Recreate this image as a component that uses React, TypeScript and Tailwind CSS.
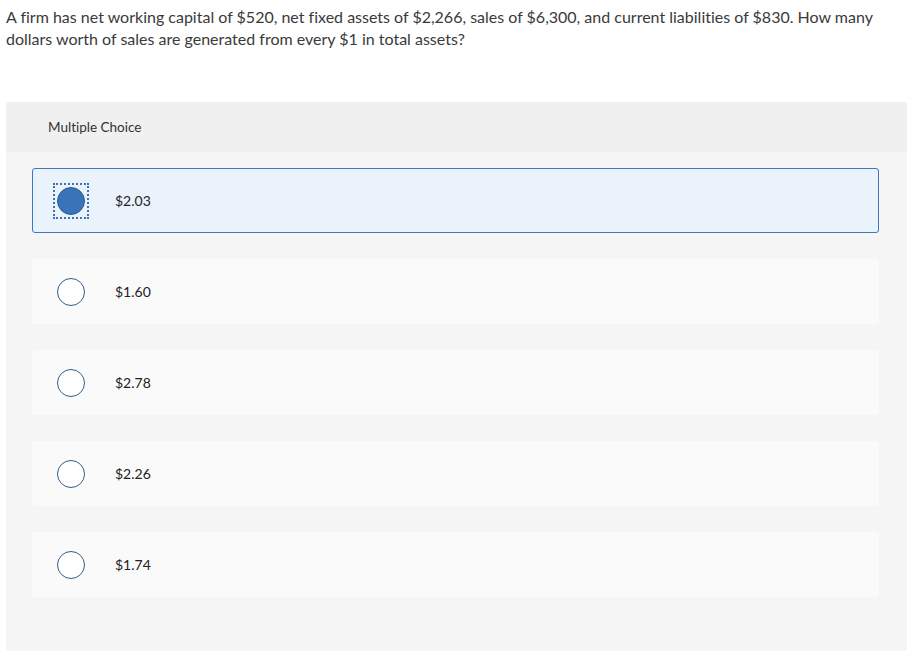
const options = [
  { id: "a", label: "$2.03", selected: true },
  { id: "b", label: "$1.60" },
  { id: "c", label: "$2.78" },
  { id: "d", label: "$2.26" },
  { id: "e", label: "$1.74" },
];

function Radio({ selected }: { selected?: boolean }) {
  if (selected) {
    return (
      <span className="flex h-[36px] w-[36px] items-center justify-center border-2 border-dotted border-[#3a72b5]">
        <span className="h-[28px] w-[28px] rounded-full border border-[#2d5f95] bg-[#3a74b8]" />
      </span>
    );
  }
  return (
    <span className="flex h-[36px] w-[36px] items-center justify-center">
      <span className="h-[28px] w-[28px] rounded-full border-[1.5px] border-[#2f5f8f] bg-white" />
    </span>
  );
}

export default function App() {
  return (
    <div className="min-h-[653px] bg-white font-['Lato',sans-serif] text-[#3a3a3a] [font-variant-ligatures:none]">
      <p className="px-[6px] pt-[6px] text-[16px] leading-[22px]">
        A firm has net working capital of $520, net fixed assets of $2,266, sales of $6,300, and current
        liabilities of $830. How many dollars worth of sales are generated from every $1 in total assets?
      </p>

      <div className="mx-[6px] mt-[52px] mr-[3px] overflow-hidden rounded-[3px] bg-[#f5f5f5]">
        <div className="flex h-[50px] items-center bg-[#f0f0f0] px-[42px] text-[13.5px] text-[#333]">
          Multiple Choice
        </div>
        <div className="flex flex-col gap-[26px] pt-[16px] pb-[54px] pl-[26px] pr-[28px]">
          {options.map((o) => (
            <div
              key={o.id}
              className={
                o.selected
                  ? "flex h-[65px] items-center rounded-[3px] border border-[#3a78c0] bg-[#eaf2fb] pl-[20px]"
                  : "flex h-[65px] items-center rounded-[3px] border border-transparent bg-[#fafafa] pl-[20px]"
              }
            >
              <Radio selected={o.selected} />
              <span className="ml-[26px] text-[14px] text-[#222]">{o.label}</span>
            </div>
          ))}
        </div>
      </div>
    </div>
  );
}
